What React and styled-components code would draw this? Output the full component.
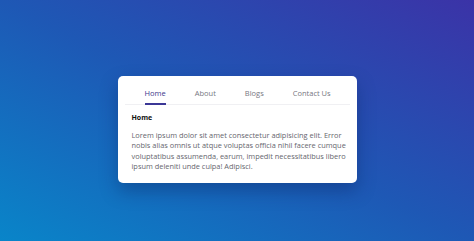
import React, { useState } from "react";
import styled, { createGlobalStyle } from "styled-components";

const GlobalStyle = createGlobalStyle`
  html, body {
    margin: 0;
    padding: 0;
    height: 100%;
  }
  body {
    font-family: "Open Sans", "Liberation Sans", sans-serif;
  }
`;

const Page = styled.div`
  width: 474px;
  height: 241px;
  display: flex;
  justify-content: center;
  align-items: flex-start;
  padding-top: 76px;
  box-sizing: border-box;
  background: linear-gradient(to top right, #0985c9 0%, #1e58b5 50%, #3b33a7 100%);
  overflow: hidden;
`;

const Card = styled.div`
  width: 239px;
  box-sizing: border-box;
  background: #fff;
  border-radius: 5px;
  padding: 0 7px 11px;
  box-shadow: 0 8px 18px rgba(10, 30, 90, 0.35);
`;

const TabBar = styled.div`
  display: flex;
  gap: 29px;
  padding-left: 20px;
  border-bottom: 1px solid #f0f0f3;
`;

const Tab = styled.button`
  border: none;
  background: none;
  cursor: pointer;
  padding: 12px 0 5px;
  margin-bottom: -1px;
  font-family: inherit;
  font-size: 7.5px;
  line-height: 10px;
  color: ${(p) => (p.$active ? "#3d3a8c" : "#77777f")};
  border-bottom: 2px solid ${(p) => (p.$active ? "#3b3796" : "transparent")};
`;

const Content = styled.div`
  padding: 8px 3px 0 7px;
`;

const Title = styled.h4`
  margin: 0 0 7px;
  font-size: 7px;
  line-height: 10px;
  font-weight: 700;
  color: #111;
`;

const Text = styled.p`
  margin: 0;
  font-size: 7.4px;
  line-height: 10.4px;
  color: #66666e;
`;

const tabs = ["Home", "About", "Blogs", "Contact Us"];

export default function App() {
  const [active, setActive] = useState(0);
  return (
    <>
      <GlobalStyle />
      <Page>
        <Card>
          <TabBar>
            {tabs.map((t, i) => (
              <Tab key={t} $active={i === active} onClick={() => setActive(i)}>
                {t}
              </Tab>
            ))}
          </TabBar>
          <Content>
            <Title>{tabs[active]}</Title>
            <Text>
              Lorem ipsum dolor sit amet consectetur adipisicing elit. Error
              nobis alias omnis ut atque voluptas officia nihil facere cumque
              voluptatibus assumenda, earum, impedit necessitatibus libero
              ipsum deleniti unde culpa! Adipisci.
            </Text>
          </Content>
        </Card>
      </Page>
    </>
  );
}
